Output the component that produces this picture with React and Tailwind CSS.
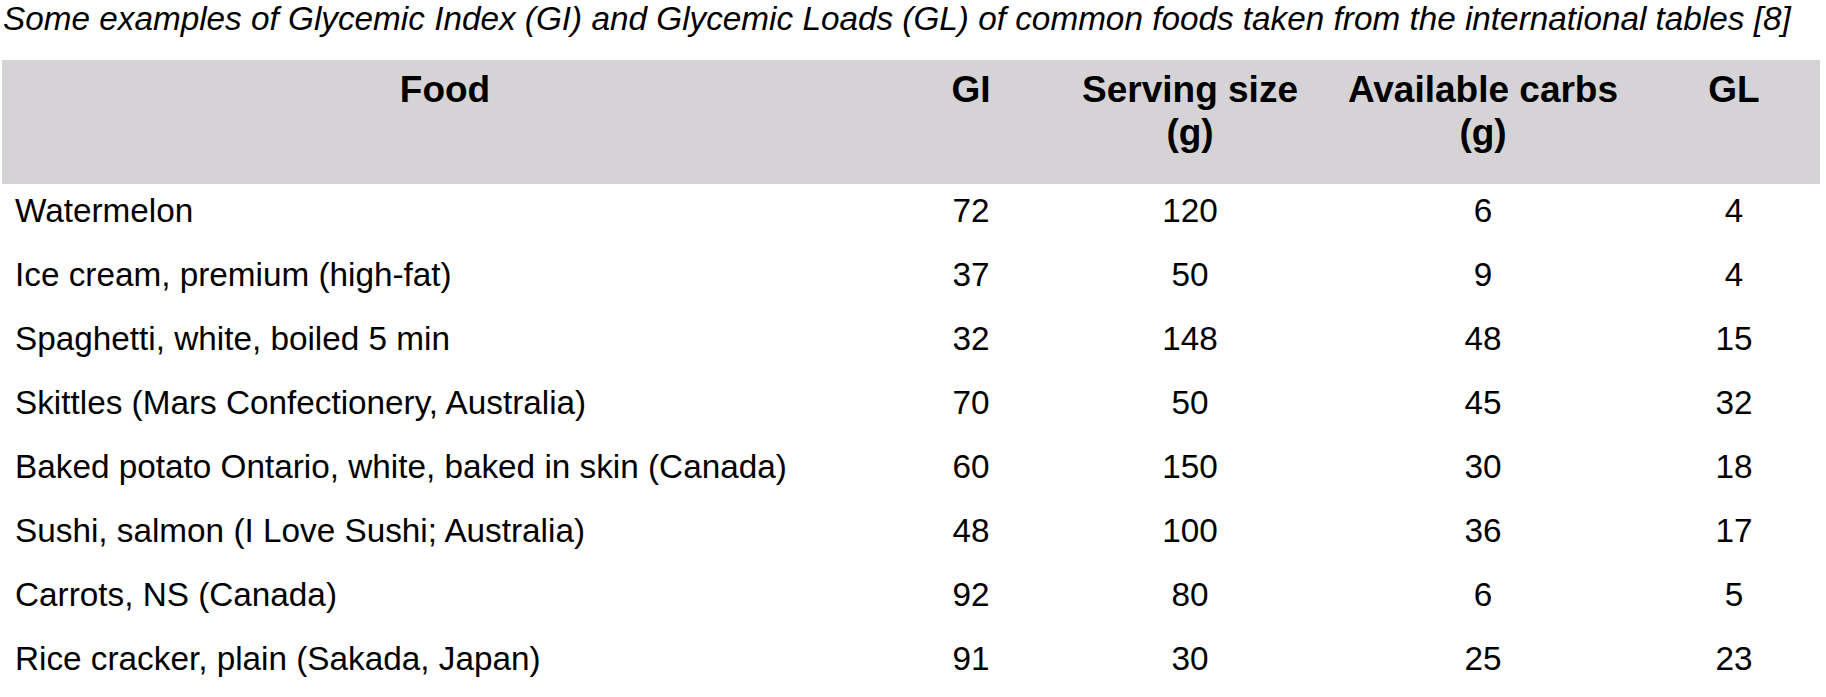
import React from 'react';

const rows = [
  ['Watermelon', '72', '120', '6', '4'],
  ['Ice cream, premium (high-fat)', '37', '50', '9', '4'],
  ['Spaghetti, white, boiled 5 min', '32', '148', '48', '15'],
  ['Skittles (Mars Confectionery, Australia)', '70', '50', '45', '32'],
  ['Baked potato Ontario, white, baked in skin (Canada)', '60', '150', '30', '18'],
  ['Sushi, salmon (I Love Sushi; Australia)', '48', '100', '36', '17'],
  ['Carrots, NS (Canada)', '92', '80', '6', '5'],
  ['Rice cracker, plain (Sakada, Japan)', '91', '30', '25', '23'],
];

const cols = 'grid grid-cols-[886px_166px_272px_314px_180px]';

export default function App() {
  return (
    <div className="w-[1826px] h-[697px] bg-white text-black overflow-hidden font-['Liberation_Sans',Arial,sans-serif]">
      <div className="h-[60px] pl-[3px] text-[33.3px] leading-[38px] italic whitespace-nowrap">
        Some examples of Glycemic Index (GI) and Glycemic Loads (GL) of common foods taken from the international tables [8]
      </div>

      <div className="ml-[2px] w-[1818px]">
        <div className={`${cols} h-[124px] bg-[#d5d3d6] pt-[8px] text-[37px] leading-[43px] font-bold text-center`}>
          <div>Food</div>
          <div>GI</div>
          <div>Serving size<br />(g)</div>
          <div>Available carbs<br />(g)</div>
          <div className="pl-[8px]">GL</div>
        </div>

        {rows.map((r) => (
          <div key={r[0]} className={`${cols} h-16 pt-[8px] text-[33.3px] leading-[38px]`}>
            <div className="pl-[13px] whitespace-nowrap">{r[0]}</div>
            <div className="text-center">{r[1]}</div>
            <div className="text-center">{r[2]}</div>
            <div className="text-center">{r[3]}</div>
            <div className="text-center pl-[8px]">{r[4]}</div>
          </div>
        ))}
      </div>
    </div>
  );
}
